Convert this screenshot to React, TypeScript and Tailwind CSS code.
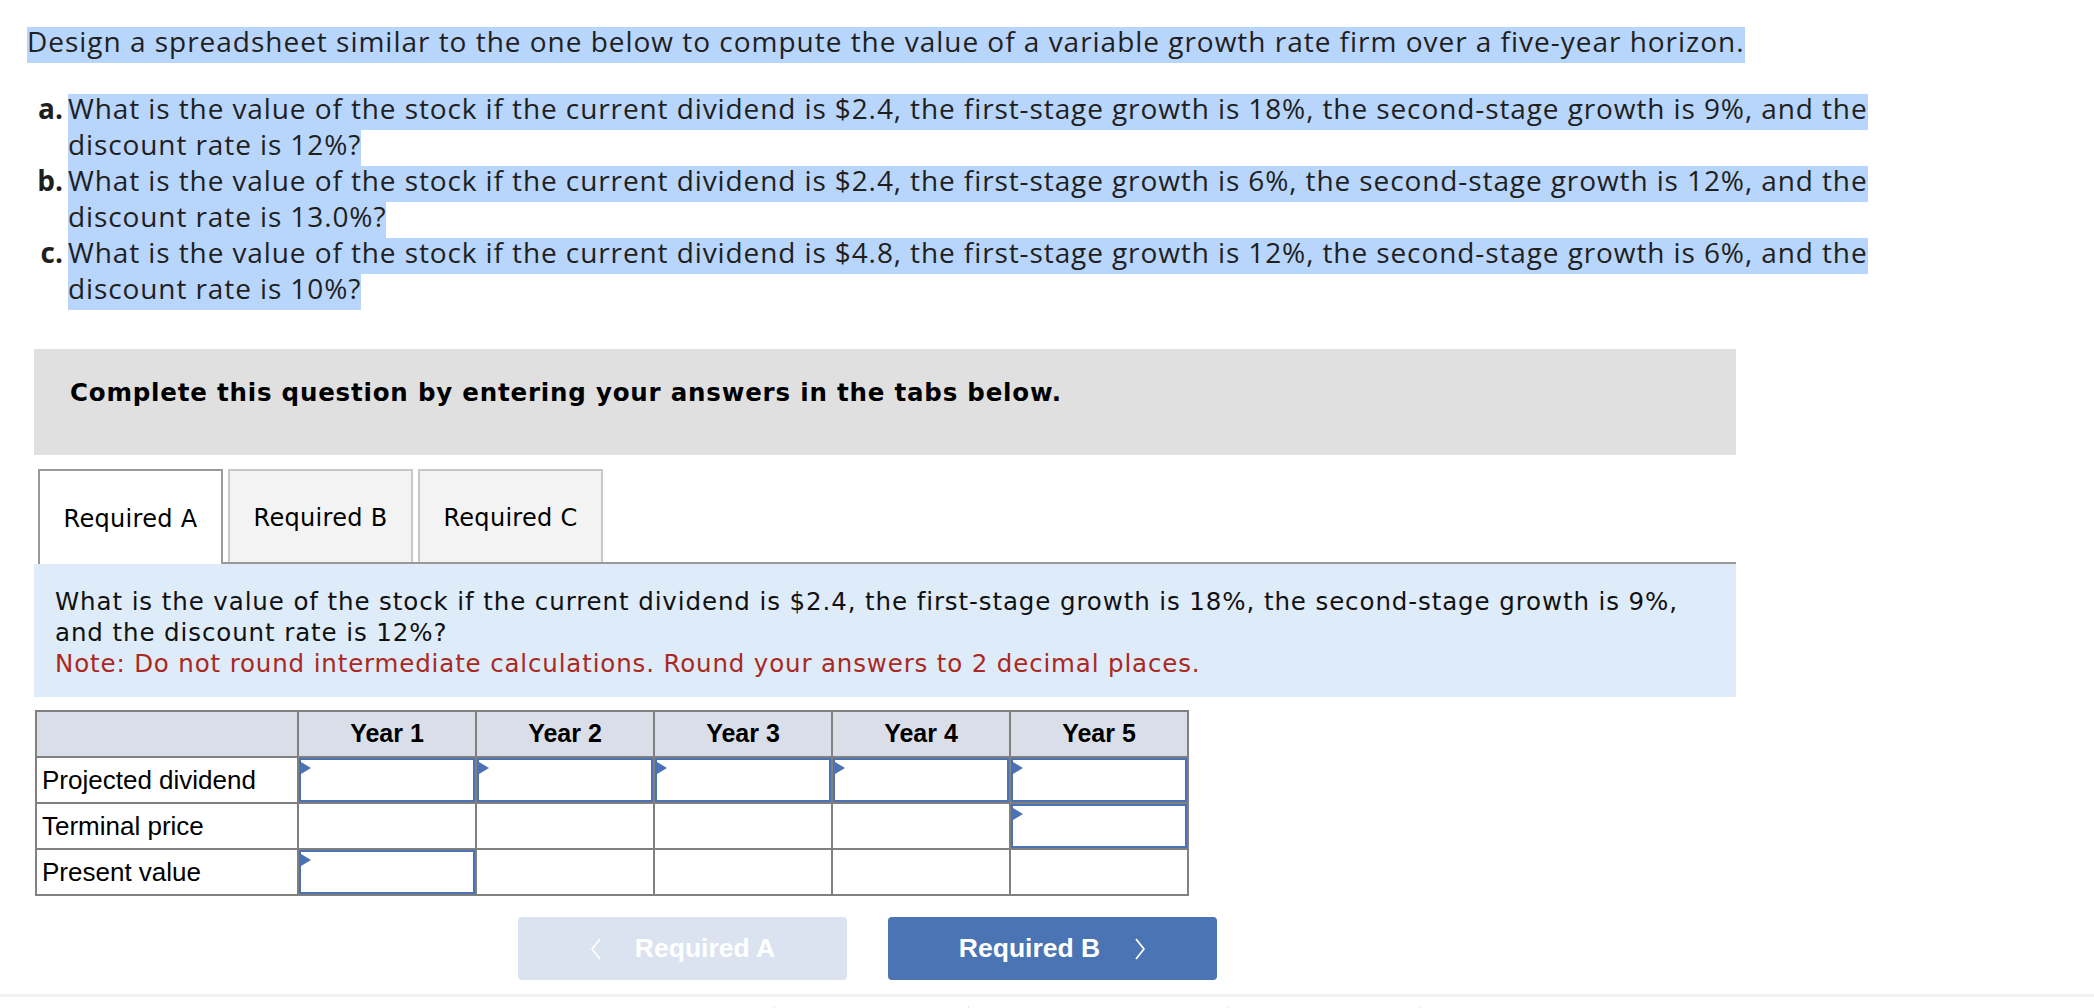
import React from 'react';

// Textos das perguntas (cada linha quebrada como no original)
const questions = [
  {
    label: 'a.',
    lines: [
      'What is the value of the stock if the current dividend is $2.4, the first-stage growth is 18%, the second-stage growth is 9%, and the',
      'discount rate is 12%?',
    ],
  },
  {
    label: 'b.',
    lines: [
      'What is the value of the stock if the current dividend is $2.4, the first-stage growth is 6%, the second-stage growth is 12%, and the',
      'discount rate is 13.0%?',
    ],
  },
  {
    label: 'c.',
    lines: [
      'What is the value of the stock if the current dividend is $4.8, the first-stage growth is 12%, the second-stage growth is 6%, and the',
      'discount rate is 10%?',
    ],
  },
];

const years = ['Year 1', 'Year 2', 'Year 3', 'Year 4', 'Year 5'];

// quais células são campos de entrada
const rows = [
  { label: 'Projected dividend', inputs: [true, true, true, true, true] },
  { label: 'Terminal price', inputs: [false, false, false, false, true] },
  { label: 'Present value', inputs: [true, false, false, false, false] },
];

const HighlightLine = ({ text, wide }: { text: string; wide?: boolean }) => (
  <div className={`w-fit h-[36px] leading-[29px] bg-[#b8d5fb] whitespace-nowrap ${wide ? 'tracking-[0.98px]' : 'tracking-[0.9px]'}`}>
    {text}
  </div>
);

const InputCell = () => (
  <div className="relative h-full w-full border-2 border-[#4a72b5] bg-white">
    <svg className="absolute left-0 top-[2px]" width="10" height="12" viewBox="0 0 10 12">
      <polygon points="0,0 10,6 0,12" fill="#4a72b5" />
    </svg>
  </div>
);

const Chevron = ({ dir }: { dir: 'left' | 'right' }) => (
  <svg width="12" height="22" viewBox="0 0 12 22" fill="none">
    <polyline
      points={dir === 'left' ? '10,1 2,11 10,21' : '2,1 10,11 2,21'}
      stroke="white"
      strokeWidth="1.8"
      strokeLinejoin="round"
    />
  </svg>
);

export default function App() {
  return (
    <div className="w-full h-[1008px] bg-white overflow-hidden text-[#1f1f1f]">
      {/* Enunciado */}
      <div className="pt-[27px] pl-[27px] font-['Open_Sans',sans-serif] text-[28px]">
        <HighlightLine wide text="Design a spreadsheet similar to the one below to compute the value of a variable growth rate firm over a five-year horizon." />

        <div className="mt-[31px]">
          {questions.map((q) => (
            <div key={q.label} className="flex">
              <div className="w-[41px] pr-[5px] text-right font-bold leading-[29px]">{q.label}</div>
              <div>
                {q.lines.map((l, i) => (
                  <HighlightLine key={i} text={l} />
                ))}
              </div>
            </div>
          ))}
        </div>
      </div>

      {/* Caixa cinza */}
      <div className="mt-[39px] ml-[34px] w-[1702px] h-[106px] bg-[#e0e0e0] pt-[29px] pl-[36px] font-['DejaVu_Sans',Verdana,sans-serif] font-bold text-[24.5px] tracking-[0.8px] leading-[30px] text-black">
        Complete this question by entering your answers in the tabs below.
      </div>

      {/* Abas */}
      <div className="mt-[14px] ml-[34px] w-[1702px] flex items-end border-b-2 border-[#999999] font-['DejaVu_Sans',Verdana,sans-serif] text-[24px] tracking-[0.3px] text-black">
        <div className="relative -mb-[2px] pl-[4px] bg-white">
          <div className="w-[185px] h-[95px] border-2 border-b-0 border-[#999999] bg-white flex items-center justify-center pt-[2px]">
            Required A
          </div>
        </div>
        <div className="ml-[5px] w-[185px] h-[93px] border-2 border-b-0 border-[#c8c8c8] bg-[#f3f3f3] flex items-center justify-center pt-[3px]">
          Required B
        </div>
        <div className="ml-[5px] w-[185px] h-[93px] border-2 border-b-0 border-[#c8c8c8] bg-[#f3f3f3] flex items-center justify-center pt-[3px]">
          Required C
        </div>
      </div>

      {/* Caixa azul */}
      <div className="ml-[34px] w-[1702px] h-[133px] bg-[#deebf8] pt-[22px] pl-[21px] font-['DejaVu_Sans',Verdana,sans-serif] text-[24.5px] tracking-[0.9px] leading-[31px] text-[#111]">
        What is the value of the stock if the current dividend is $2.4, the first-stage growth is 18%, the second-stage growth is 9%,
        <br />
        and the discount rate is 12%?
        <br />
        <span className="text-[#ab2822] tracking-[0.85px]">Note: Do not round intermediate calculations. Round your answers to 2 decimal places.</span>
      </div>

      {/* Tabela */}
      <table className="mt-[13px] ml-[35px] border-collapse table-fixed font-['Liberation_Sans',Arial,sans-serif] text-black">
        <colgroup>
          <col className="w-[262px]" />
          {years.map((y) => (
            <col key={y} className="w-[178px]" />
          ))}
        </colgroup>
        <thead>
          <tr className="h-[46px] bg-[#d9dee8]">
            <th className="border-2 border-[#808080]"></th>
            {years.map((y) => (
              <th key={y} className="border-2 border-[#808080] text-[25px] font-bold text-center">
                {y}
              </th>
            ))}
          </tr>
        </thead>
        <tbody>
          {rows.map((r) => (
            <tr key={r.label} className="h-[46px]">
              <td className="border-2 border-[#808080] pl-[5px] text-[26px] whitespace-nowrap">{r.label}</td>
              {r.inputs.map((inp, i) => (
                <td key={i} className="border-2 border-[#808080] p-0 h-[46px]">
                  {inp ? (
                    <div className="h-[44px] p-0">
                      <InputCell />
                    </div>
                  ) : null}
                </td>
              ))}
            </tr>
          ))}
        </tbody>
      </table>

      {/* Botões */}
      <div className="mt-[21px] ml-[518px] flex gap-[41px] font-['Liberation_Sans',Arial,sans-serif] font-bold text-[26.5px] text-white">
        <button className="w-[329px] h-[63px] rounded-[4px] bg-[#dae3ef] flex items-center justify-center gap-[33px]">
          <Chevron dir="left" />
          <span>Required A</span>
        </button>
        <button className="w-[329px] h-[63px] rounded-[4px] bg-[#4a74b3] flex items-center justify-center gap-[34px]">
          <span>Required B</span>
          <Chevron dir="right" />
        </button>
      </div>

      {/* Rodapé */}
      <div className="mt-[14px] h-[3px] w-full bg-[#f2f2f2]"></div>
      <div className="flex h-[12px] mt-[9px]">
        <div className="ml-[774px] w-px h-full bg-[#e6e6e6]"></div>
        <div className="ml-[193px] w-px h-full bg-[#e6e6e6]"></div>
        <div className="ml-[258px] w-px h-full bg-[#e6e6e6]"></div>
        <div className="ml-[192px] w-px h-full bg-[#e6e6e6]"></div>
      </div>
    </div>
  );
}
